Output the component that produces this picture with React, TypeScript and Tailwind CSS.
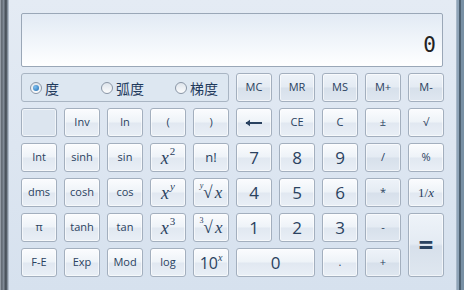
import React from "react";

const sans = "font-['Open_Sans','Noto_Sans',sans-serif]";
const serif = "font-['Liberation_Serif','DejaVu_Serif',serif]";

const normalBg =
  "bg-[linear-gradient(#fbfcfe,#eef3f8_48%,#e1e8f1_52%,#e9eff6)]";
const opBg =
  "bg-[linear-gradient(#eef3f9,#e4ebf3_48%,#d7e0eb_52%,#dfe7f0)]";

function Btn({
  children,
  op = false,
  big = false,
  className = "",
}: {
  children?: React.ReactNode;
  op?: boolean;
  big?: boolean;
  className?: string;
}) {
  return (
    <div
      className={`flex items-center justify-center rounded-[3px] border border-[#a3afbe] shadow-[inset_0_0_0_1px_rgba(255,255,255,0.6)] text-[#2a4260] ${
        op ? opBg : normalBg
      } ${big ? "text-[17px]" : "text-[11px]"} ${sans} ${className}`}
    >
      {children}
    </div>
  );
}

function Power({ exp, italicExp = false }: { exp: string; italicExp?: boolean }) {
  return (
    <span className={`${serif} italic text-[18px] leading-none flex items-start`}>
      <span>x</span>
      <span className={`text-[11px] relative top-[-3px] ml-[1px] ${italicExp ? "italic" : "not-italic"}`}>{exp}</span>
    </span>
  );
}

function Root({ idx, italicIdx = false }: { idx: string; italicIdx?: boolean }) {
  return (
    <span className={`${serif} text-[17px] leading-none flex items-start`}>
      <span className={`text-[8px] leading-none mt-[-2px] ${italicIdx ? "italic" : ""}`}>{idx}</span>
      <span>√</span>
      <span className="italic ml-[2px]">x</span>
    </span>
  );
}

function Radio({ label, checked = false, w }: { label: string; checked?: boolean; w: string }) {
  return (
    <div className={`flex items-center gap-[3px] ${w}`}>
      <div className="w-[12px] h-[12px] rounded-full border border-[#8a96a6] bg-[linear-gradient(#dfe5ec,#fbfcfd)] flex items-center justify-center">
        {checked && (
          <div className="w-[6px] h-[6px] rounded-full bg-[radial-gradient(circle_at_35%_35%,#7fc0f0,#1f6bb0)]" />
        )}
      </div>
      <span className="text-[14px] leading-none text-[#1f3a5c] font-['Noto_Sans_CJK_SC',sans-serif]">
        {label}
      </span>
    </div>
  );
}

export default function App() {
  return (
    <div className="w-[464px] h-[290px] flex overflow-hidden">
      {/* left window frame */}
      <div className="w-[9px] h-full bg-[linear-gradient(to_right,#aab2bc_0px,#4e565f_2px,#8c96a2_3px,#5a636d_5px,#3c444c_6px,#9aa6b4_8px,#c8d4e2_9px)]" />

      <div className="flex-1 h-full bg-[linear-gradient(#e4ebf4,#d6e1ee)] pl-[12px] pt-[13px]">
        {/* display */}
        <div className="w-[422px] h-[54px] rounded-[2px] border border-[#9aa7b7] bg-[linear-gradient(#e2eaf4,#f3f7fb_60%,#ffffff)] flex items-end justify-end pr-[6px] pb-[10px]">
          <span className="text-[21px] leading-none text-[#222] font-['DejaVu_Sans_Mono',monospace]">0</span>
        </div>

        <div className="mt-[6px] grid grid-cols-[repeat(10,36px)] grid-rows-[repeat(6,29px)] gap-x-[7px] gap-y-[6px]">
          <div className="col-span-5 rounded-[3px] border border-[#a9b5c3] bg-[#dde7f1] flex items-center pl-[8px]">
            <Radio label="度" checked w="w-[71px]" />
            <Radio label="弧度" w="w-[74px]" />
            <Radio label="梯度" w="w-[50px]" />
          </div>
          <Btn op>MC</Btn>
          <Btn op>MR</Btn>
          <Btn op>MS</Btn>
          <Btn op>M+</Btn>
          <Btn op>M-</Btn>

          <Btn className="bg-none bg-[#dce5ef]" />
          <Btn>Inv</Btn>
          <Btn>ln</Btn>
          <Btn>(</Btn>
          <Btn>)</Btn>
          <Btn>
            <svg width="18" height="8" viewBox="0 0 18 8">
              <path d="M1 4 H17" stroke="#2a4260" strokeWidth="2" />
              <path d="M0.5 4 L5 0.8 L5 7.2 Z" fill="#2a4260" />
            </svg>
          </Btn>
          <Btn>CE</Btn>
          <Btn>C</Btn>
          <Btn>±</Btn>
          <Btn>√</Btn>

          <Btn>Int</Btn>
          <Btn>sinh</Btn>
          <Btn>sin</Btn>
          <Btn><Power exp="2" /></Btn>
          <Btn className="text-[13px]">n!</Btn>
          <Btn big>7</Btn>
          <Btn big>8</Btn>
          <Btn big>9</Btn>
          <Btn op>/</Btn>
          <Btn>%</Btn>

          <Btn>dms</Btn>
          <Btn>cosh</Btn>
          <Btn>cos</Btn>
          <Btn><Power exp="y" italicExp /></Btn>
          <Btn><Root idx="y" italicIdx /></Btn>
          <Btn big>4</Btn>
          <Btn big>5</Btn>
          <Btn big>6</Btn>
          <Btn op>*</Btn>
          <Btn>
            <span className={`${serif} text-[13px]`}>
              1/<span className="italic">x</span>
            </span>
          </Btn>

          <Btn>π</Btn>
          <Btn>tanh</Btn>
          <Btn>tan</Btn>
          <Btn><Power exp="3" /></Btn>
          <Btn><Root idx="3" /></Btn>
          <Btn big>1</Btn>
          <Btn big>2</Btn>
          <Btn big>3</Btn>
          <Btn op>-</Btn>
          <Btn op className="row-span-2 text-[26px] font-bold text-[#1d3556]">=</Btn>

          <Btn>F-E</Btn>
          <Btn>Exp</Btn>
          <Btn>Mod</Btn>
          <Btn>log</Btn>
          <Btn>
            <span className={`${sans} text-[16px] leading-none flex items-start`}>
              10<span className={`${serif} italic text-[10px] relative top-[-2px]`}>x</span>
            </span>
          </Btn>
          <Btn big className="col-span-2">0</Btn>
          <Btn>.</Btn>
          <Btn op>+</Btn>
        </div>
      </div>

      {/* right window frame */}
      <div className="w-[8px] h-full bg-[linear-gradient(to_right,#c0ccd8_0px,#8fa4b8_1px,#8fa4b8_3px,#4d6070_3px,#4d6070_5px,#7890a4_5px)]" />
    </div>
  );
}
